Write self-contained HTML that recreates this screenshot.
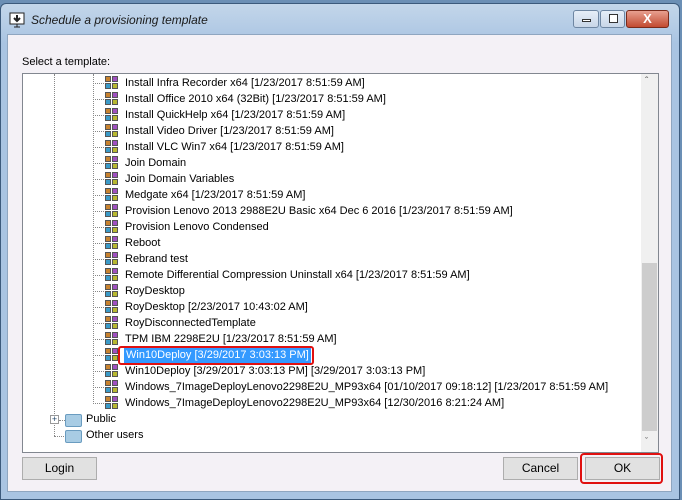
<!DOCTYPE html>
<html><head><style>
*{margin:0;padding:0;box-sizing:border-box}
body{width:682px;height:500px;overflow:hidden;background:#6b8fb5;font-family:"Liberation Sans",Arial,sans-serif;font-size:11px;color:#000;position:relative}
.frame{position:absolute;left:0;top:3px;width:680px;height:497px;background:linear-gradient(#c3d6ea,#a9c4e2 40px,#a9c4e2);border:1px solid #3c5a7c;border-radius:6px 6px 0 0}
.title{position:absolute;left:31px;top:13px;font-style:italic;font-size:12px;color:#1a1a1a}
.client{position:absolute;left:7px;top:34px;width:665px;height:458px;background:#f4f1f6;border:1px solid #8fa6c0}
.tb{position:absolute;top:10px;height:18px;border:1px solid #6e86a2;border-radius:3px;background:linear-gradient(#e6eef8,#c8d6e8)}
.tree{position:absolute;left:22px;top:73px;width:637px;height:380px;background:#fff;border:1px solid #828790;overflow:hidden}
.row{position:absolute;left:101px;height:16px;line-height:16px;white-space:nowrap}
.row span{position:absolute;left:23px;top:0}
.ic{position:absolute;left:3px;top:1px;width:14px;height:14px}
.ic i{position:absolute;width:6px;height:6px;border:1px solid #555}
.vl{position:absolute;border-left:1px dotted #888}
.hl{position:absolute;border-top:1px dotted #888}
.sb{position:absolute;left:618px;top:0;width:17px;height:378px;background:#f0f0f0}
.btn{position:absolute;top:457px;height:23px;border:1px solid #adadad;background:#e1e1e1;text-align:center;line-height:21px;font-size:12px}
</style></head><body>
<div class="frame"></div>
<svg style="position:absolute;left:9px;top:12px" width="17" height="17"><rect x="1" y="1" width="14" height="11" fill="#fff" stroke="#222"/><path d="M8 3v6M5 6l3 3 3-3" stroke="#222" fill="none" stroke-width="2"/><path d="M5 15h6M8 12v3" stroke="#222"/></svg>
<div class="title">Schedule a provisioning template</div>
<div class="tb" style="left:573px;width:26px"><div style="position:absolute;left:8px;top:8px;width:9px;height:3px;background:#fff;border:1px solid #333"></div></div>
<div class="tb" style="left:600px;width:25px"><div style="position:absolute;left:8px;top:3px;width:9px;height:9px;background:#fff;border:1px solid #333"></div></div>
<div class="tb" style="left:626px;width:43px;background:linear-gradient(#e8a090,#c24a30);border-color:#7a2a1a;color:#fff;text-align:center;font-weight:bold;line-height:15px;font-size:13px">X</div>
<div class="client"></div>
<div style="position:absolute;left:22px;top:56px;font-size:11px">Select a template:</div>
<div class="tree">
<div class="vl" style="left:31px;top:0;height:362px"></div>
<div class="vl" style="left:70px;top:0;height:330px"></div>
<div class="hl" style="left:31px;top:362px;width:10px"></div>
<div class="hl" style="left:36px;top:346px;width:6px"></div>
<div style="position:absolute;left:27px;top:341px;width:9px;height:9px;border:1px solid #999;background:#fff;font-size:9px;line-height:7px;text-align:center;color:#246">+</div>
<div style="position:absolute;left:42px;top:340px;width:17px;height:13px;background:#a8cce4;border:1px solid #6a9cc0;border-radius:2px"></div>
<div style="position:absolute;left:63px;top:339px">Public</div>
<div style="position:absolute;left:42px;top:356px;width:17px;height:13px;background:#a8cce4;border:1px solid #6a9cc0;border-radius:2px"></div>
<div style="position:absolute;left:63px;top:355px">Other users</div>
<div id="rows"></div>
<div class="sb"><div style="position:absolute;left:1px;top:189px;width:15px;height:168px;background:#cdcdcd"></div>
<div style="position:absolute;left:4px;top:2px;font-size:10px;color:#555">&#710;</div>
<div style="position:absolute;left:4px;top:362px;font-size:9px;color:#555">&#711;</div></div>
</div>
<div class="btn" style="left:22px;width:75px">Login</div>
<div class="btn" style="left:503px;width:75px">Cancel</div>
<div class="btn" style="left:585px;width:75px">OK</div>
<div style="position:absolute;left:580px;top:453px;width:83px;height:31px;border:2px solid #e01010;border-radius:4px"></div>
<script>
var t=["Install Infra Recorder x64 [1/23/2017 8:51:59 AM]","Install Office 2010 x64 (32Bit) [1/23/2017 8:51:59 AM]","Install QuickHelp x64 [1/23/2017 8:51:59 AM]","Install Video Driver [1/23/2017 8:51:59 AM]","Install VLC Win7 x64 [1/23/2017 8:51:59 AM]","Join Domain","Join Domain Variables","Medgate x64 [1/23/2017 8:51:59 AM]","Provision Lenovo 2013 2988E2U Basic x64 Dec 6 2016 [1/23/2017 8:51:59 AM]","Provision Lenovo Condensed","Reboot","Rebrand test","Remote Differential Compression Uninstall x64 [1/23/2017 8:51:59 AM]","RoyDesktop","RoyDesktop [2/23/2017 10:43:02 AM]","RoyDisconnectedTemplate","TPM IBM 2298E2U [1/23/2017 8:51:59 AM]","Win10Deploy [3/29/2017 3:03:13 PM]","Win10Deploy [3/29/2017 3:03:13 PM] [3/29/2017 3:03:13 PM]","Windows_7ImageDeployLenovo2298E2U_MP93x64 [01/10/2017 09:18:12] [1/23/2017 8:51:59 AM]","Windows_7ImageDeployLenovo2298E2U_MP93x64 [12/30/2016 8:21:24 AM]"];
var h="";t.forEach(function(s,i){var y=1+i*16;
h+='<div class="hl" style="left:70px;top:'+(y+8)+'px;width:11px"></div>';
h+='<div class="row" style="left:79px;top:'+y+'px"><div class="ic"><i style="left:0;top:0;background:#c8822e"></i><i style="left:7px;top:0;background:#a050c0"></i><i style="left:0;top:7px;background:#3a9ac8"></i><i style="left:7px;top:7px;background:#b8b830"></i></div>'+
(i==17?'<span style="left:22px;padding:0 2px;background:#3399ff;color:#fff">'+s+'</span>':'<span>'+s+'</span>')+'</div>';});
h+='<div style="position:absolute;left:95px;top:272px;width:196px;height:19px;border:2px solid #e01010;border-radius:3px"></div>';
document.getElementById("rows").innerHTML=h;
</script>
</body></html>
